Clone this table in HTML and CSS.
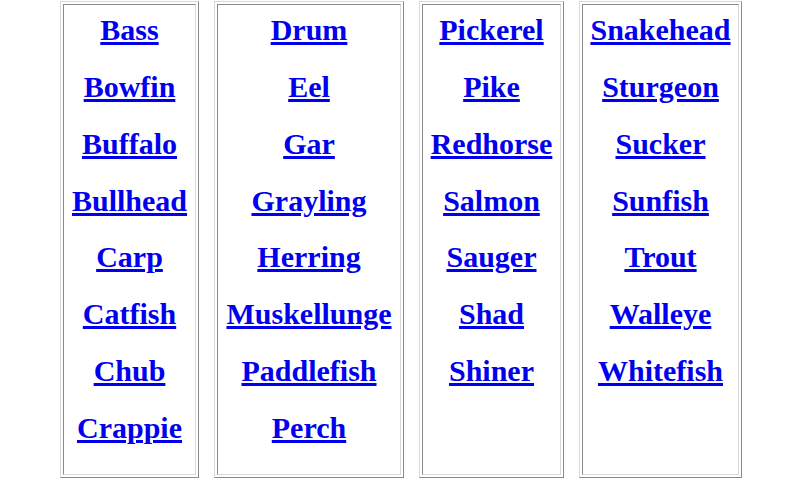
FILE: index.html
```html
<!DOCTYPE html>
<html>
<head>
<meta charset="utf-8">
<title>Fish</title>
<link rel="stylesheet" href="styles.css">
</head>
<body>
<div class="board">
  <div class="col col-1"><ul class="cell">
    <li><a href="#">Bass</a></li>
    <li><a href="#">Bowfin</a></li>
    <li><a href="#">Buffalo</a></li>
    <li><a href="#">Bullhead</a></li>
    <li><a href="#">Carp</a></li>
    <li><a href="#">Catfish</a></li>
    <li><a href="#">Chub</a></li>
    <li><a href="#">Crappie</a></li>
  </ul></div>
  <div class="col col-2"><ul class="cell">
    <li><a href="#">Drum</a></li>
    <li><a href="#">Eel</a></li>
    <li><a href="#">Gar</a></li>
    <li><a href="#">Grayling</a></li>
    <li><a href="#">Herring</a></li>
    <li><a href="#">Muskellunge</a></li>
    <li><a href="#">Paddlefish</a></li>
    <li><a href="#">Perch</a></li>
  </ul></div>
  <div class="col col-3"><ul class="cell">
    <li><a href="#">Pickerel</a></li>
    <li><a href="#">Pike</a></li>
    <li><a href="#">Redhorse</a></li>
    <li><a href="#">Salmon</a></li>
    <li><a href="#">Sauger</a></li>
    <li><a href="#">Shad</a></li>
    <li><a href="#">Shiner</a></li>
  </ul></div>
  <div class="col col-4"><ul class="cell">
    <li><a href="#">Snakehead</a></li>
    <li><a href="#">Sturgeon</a></li>
    <li><a href="#">Sucker</a></li>
    <li><a href="#">Sunfish</a></li>
    <li><a href="#">Trout</a></li>
    <li><a href="#">Walleye</a></li>
    <li><a href="#">Whitefish</a></li>
  </ul></div>
</div>
</body>
</html>
```
FILE: styles.css
```css
html, body {
  margin: 0;
  padding: 0;
  background: #ffffff;
}
body {
  font-family: "Liberation Serif", "Times New Roman", serif;
}
.board {
  display: flex;
  justify-content: flex-start;
  align-items: stretch;
  gap: 15px;
  padding: 1px 0 0 60px;
  height: 478px;
  box-sizing: border-box;
}
.col {
  display: flex;
  box-sizing: border-box;
  border: 1px solid;
  border-color: #d8d8d8 #8a8a8a #8a8a8a #d8d8d8;
  padding: 2px;
}
.col-1 { width: 139px; }
.col-2 { width: 190px; }
.col-3 { width: 145px; }
.col-4 { width: 163px; }
.cell {
  flex: 1;
  list-style: none;
  margin: 0;
  padding: 0;
  border: 1px solid;
  border-color: #8a8a8a #d8d8d8 #d8d8d8 #8a8a8a;
  display: flex;
  flex-direction: column;
  gap: 6.86px;
}
.cell li {
  height: 50px;
  line-height: 50px;
  text-align: center;
  white-space: nowrap;
}
.cell a {
  color: #0000ee;
  font-weight: bold;
  font-size: 30px;
  text-decoration: underline;
}
```
